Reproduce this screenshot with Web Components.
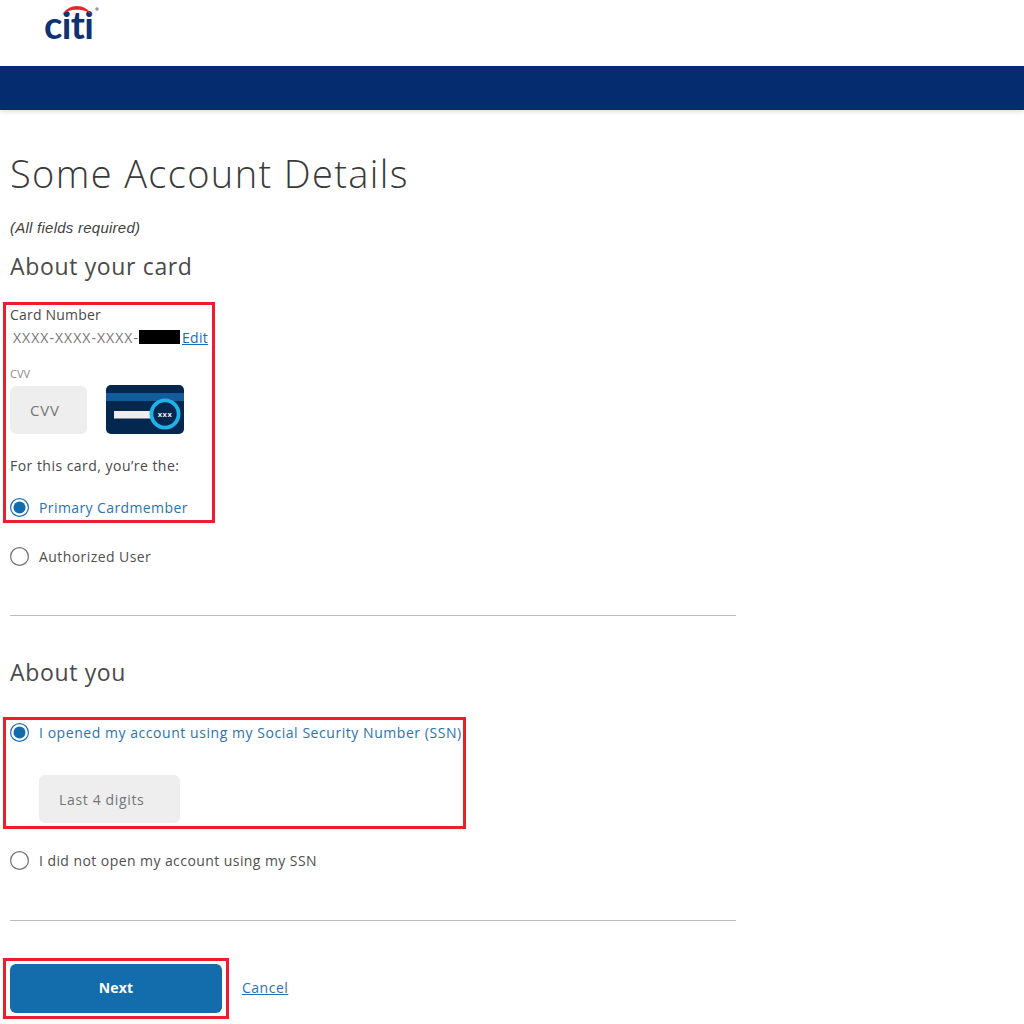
<!DOCTYPE html>
<html>
<head>
<meta charset="utf-8">
<title>Some Account Details</title>
<style>
  html, body { margin: 0; padding: 0; background: #fff; }
  body { font-family: "Open Sans", sans-serif; color: #4a4a4a; }
</style>
</head>
<body>
<citi-header></citi-header>
<account-form>
  <page-title>Some Account Details</page-title>
  <required-note>(All fields required)</required-note>
  <section-title style="margin-top:13px">About your card</section-title>

  <red-box style="margin-top:21px;width:212px;height:221px;padding-top:1px">
    <plain-label>Card Number</plain-label>
    <card-number>XXXX-XXXX-XXXX-</card-number>
    <small-label>CVV</small-label>
    <cvv-row></cvv-row>
    <plain-label style="margin-top:23px;letter-spacing:.47px">For this card, you’re the:</plain-label>
    <radio-option checked style="margin-top:22px;letter-spacing:.4px">Primary Cardmember</radio-option>
  </red-box>
  <radio-option style="margin-top:23px">Authorized User</radio-option>
  <form-rule style="margin-top:49px"></form-rule>
  <section-title style="margin-top:41px">About you</section-title>

  <red-box style="margin-top:30px;width:463px;height:112px">
    <radio-option checked style="letter-spacing:.55px">I opened my account using my Social Security Number (SSN)</radio-option>
    <text-box style="margin:33px 0 0 29px;width:141px;letter-spacing:.65px">Last 4 digits</text-box>
  </red-box>
  <radio-option style="margin-top:21px">I did not open my account using my SSN</radio-option>
  <form-rule style="margin-top:50px"></form-rule>

  <form-actions></form-actions>
</account-form>

<template id="header-tpl">
  <style>
    :host { display: block; }
    .top { height: 66px; padding-left: 45px; box-sizing: border-box; }
    .logo { position: relative; display: inline-block; width: 56px; height: 42px; }
    .word {
      position: absolute; left: -1px; top: 1px;
      font: 700 38px/46px "Lato", sans-serif; color: #0f3272; letter-spacing: -.6px;
    }
    svg { position: absolute; left: 0; top: 0; }
    .bar { height: 44px; background: #052c6e; box-shadow: 0 2px 4px rgba(0,0,0,.12); }
  </style>
  <div class="top">
    <div class="logo">
      <span class="word">citi</span>
      <svg width="56" height="42" viewBox="0 0 56 42">
        <path d="M17 15 C24 3 40 3 47 15 C40 8 24 8 17 15 Z" fill="#e8262c"/>
        <circle cx="52" cy="9" r="1.8" fill="#8a9bb8"/>
      </svg>
    </div>
  </div>
  <div class="bar"></div>
</template>

<template id="card-img-tpl">
  <style>:host { display: block; width: 78px; height: 49px; }</style>
  <svg width="78" height="49" viewBox="0 0 78 49">
    <rect width="78" height="49" rx="5" fill="#03274f"/>
    <rect y="8" width="78" height="8" fill="#135c9c"/>
    <rect x="8" y="26" width="38" height="7.5" fill="#eeeeee"/>
    <circle cx="59" cy="29" r="13.6" fill="#03274f" stroke="#1eb2e6" stroke-width="3.8"/>
    <text x="59" y="31.5" text-anchor="middle" font-family="Open Sans, sans-serif" font-size="7.5" font-weight="700" letter-spacing=".5" fill="#e2e7ee">xxx</text>
  </svg>
</template>

<script>
  function simple(name, css, html) {
    customElements.define(name, class extends HTMLElement {
      connectedCallback() {
        if (this.shadowRoot) return;
        const root = this.attachShadow({ mode: "open" });
        root.innerHTML = `<style>${css}</style>${html || "<slot></slot>"}`;
      }
    });
  }

  class CitiHeader extends HTMLElement {
    connectedCallback() {
      const root = this.attachShadow({ mode: "open" });
      root.appendChild(document.getElementById("header-tpl").content.cloneNode(true));
    }
  }
  customElements.define("citi-header", CitiHeader);

  class CardImage extends HTMLElement {
    connectedCallback() {
      const root = this.attachShadow({ mode: "open" });
      root.appendChild(document.getElementById("card-img-tpl").content.cloneNode(true));
    }
  }
  customElements.define("card-image", CardImage);

  simple("account-form", `:host { display: block; padding: 40px 0 0 10px; width: 726px; }`);
  simple("page-title", `:host { display: block; font-size: 38px; line-height: 46px; font-weight: 300; letter-spacing: 1.37px; color: #3a3a3a; }`);
  simple("required-note", `:host { display: block; margin-top: 22px; font-family: "Liberation Sans", sans-serif; font-size: 15px; letter-spacing: .25px; line-height: 20px; font-style: italic; color: #3f3f3f; }`);
  simple("section-title", `:host { display: block; font-size: 23px; line-height: 30px; letter-spacing: .65px; color: #4a4a4a; }`);
  simple("red-box", `:host { display: block; box-sizing: border-box; margin-left: -7px; padding: 2px 4px; border: 3px solid #ed1c2e; }`);
  simple("plain-label", `:host { display: block; font-size: 14px; line-height: 18px; letter-spacing: .2px; color: #4a4a4a; }`);
  simple("small-label", `:host { display: block; margin-top: 21px; font-size: 11px; line-height: 14px; color: #8a8a8a; }`);
  simple("card-number", `
    :host { display: flex; align-items: center; margin-top: 4px; height: 18px; padding-left: 3px; font-size: 14px; letter-spacing: 1.03px; white-space: nowrap; color: #757575; }
    .mask { flex: none; width: 41px; height: 14px; background: #000; }
    a { margin-left: 2px; color: #1a6dae; letter-spacing: .3px; text-decoration: underline; }
  `, `<slot></slot><span class="mask"></span><a href="#">Edit</a>`);
  simple("text-box", `
    :host { display: flex; align-items: center; box-sizing: border-box; height: 48px; padding: 1px 0 0 20px; background: #eeeeee; border-radius: 6px; font-size: 14px; letter-spacing: .4px; color: #757575; }
  `);
  simple("cvv-row", `
    :host { display: flex; align-items: center; gap: 19px; margin-top: 4px; }
    text-box { width: 77px; font-size: 15px; letter-spacing: .8px; }
  `, `<text-box>CVV</text-box><card-image></card-image>`);
  simple("form-rule", `:host { display: block; height: 1px; background: #bdbdbd; }`);

  class RadioOption extends HTMLElement {
    connectedCallback() {
      const root = this.attachShadow({ mode: "open" });
      const on = this.hasAttribute("checked");
      root.innerHTML = `
        <style>
          :host { display: flex; align-items: center; gap: 10px; height: 20px; font-size: 14px; letter-spacing: .43px; white-space: nowrap; color: ${on ? "#2a73b0" : "#4f4f4f"}; }
          svg { flex: none; }
        </style>
        <svg width="19" height="19" viewBox="0 0 19 19">
          <circle cx="9.5" cy="9.5" r="8.9" fill="#fff" stroke="${on ? "#1f72ae" : "#6f6f6f"}" stroke-width="1.2"/>
          ${on ? '<circle cx="9.5" cy="9.5" r="6" fill="#136cab"/>' : ""}
        </svg>
        <span><slot></slot></span>`;
    }
  }
  customElements.define("radio-option", RadioOption);

  simple("form-actions", `
    :host { display: flex; align-items: center; margin-top: 37px; margin-left: -7px; }
    .frame { box-sizing: border-box; width: 226px; height: 61px; padding: 3px 4px; border: 3px solid #ed1c2e; }
    button {
      display: block; width: 212px; height: 49px; padding: 0 0 2px; border: 0; border-radius: 6px; background: #136cab;
      color: #fff; font: 700 14px "Open Sans", sans-serif; letter-spacing: .2px;
    }
    a { margin: 0 0 2px 13px; font-size: 14px; letter-spacing: .5px; color: #2a73b0; text-decoration: underline; }
  `, `<div class="frame"><button type="button">Next</button></div><a href="#">Cancel</a>`);
</script>
</body>
</html>
